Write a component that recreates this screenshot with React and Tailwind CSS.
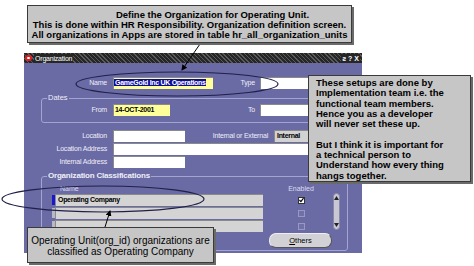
import React from 'react';

const Label = ({ w, children, className = '' }) => (
  <div className={`${w} shrink-0 text-right text-[7px] leading-[12px] text-[#eeeef8] tracking-[-0.2px] ${className}`}>{children}</div>
);

const Field = ({ w, className = 'bg-white', children }) => (
  <div className={`${w} h-[12px] shrink-0 border-t border-l border-[#8a8a8a] border-b-[#f4f4f4] border-r-[#f4f4f4] ${className} text-[7px] leading-[10px] font-bold tracking-[-0.3px] text-black overflow-hidden whitespace-nowrap`}>
    {children}
  </div>
);

const Check = ({ on }) => (
  <div className={`w-[7px] h-[7px] border ${on ? 'border-[#333] bg-white' : 'border-[#9898c0] bg-[#7070a8]'} flex items-center justify-center`}>
    {on && (
      <svg width="6" height="6" viewBox="0 0 6 6">
        <path d="M0.5 3 L2.3 5 L5.5 0.8" stroke="#000" strokeWidth="1.4" fill="none" />
      </svg>
    )}
  </div>
);

const OrgWindow = () => (
  <div className="w-[338px] h-[200px] flex flex-col">
    {/* title bar */}
    <div className="h-[10px] flex items-center bg-[repeating-linear-gradient(45deg,#5a5a5a_0px,#5a5a5a_1px,#262626_1px,#262626_3px)]">
      <div className="ml-[1px] w-[7px] h-[6px] rounded-[3px] border-[2px] border-[#e02020] bg-white" />
      <span className="ml-[2px] px-[1px] bg-[#262626] text-[7px] leading-[9px] text-white tracking-[-0.2px]">Organization</span>
      <div className="ml-auto mr-[2px] flex items-center gap-[2px] bg-[#262626] px-[1px] text-[7px] leading-[9px] font-bold text-white">
        <span>ƨ</span>
        <span>?</span>
        <span>X</span>
      </div>
    </div>

    {/* body */}
    <div className="flex-1 flex flex-col bg-[#6a6aa4] pt-[14px]">
      <div className="flex items-center">
        <Label w="w-[83px]">Name</Label>
        <div className="ml-[6px]">
          <Field w="w-[100px]" className="bg-[#ffff99]">
            <span className="bg-[#0c0c9c] text-white pl-[1px]">GameGold Inc UK Operations</span>
          </Field>
        </div>
        <Label w="w-[42px]">Type</Label>
        <div className="ml-[5px]">
          <Field w="w-[85px]" />
        </div>
      </div>

      {/* Dates group */}
      <div className="relative mt-[9px] ml-[17px] w-[307px] h-[25px] border border-[#a4a4d0] rounded-[3px]">
        <span className="absolute -top-[6px] left-[5px] px-[1px] bg-[#6a6aa4] text-[7.5px] leading-[10px] text-[#eeeef8]">Dates</span>
        <div className="flex items-center pt-[5px]">
          <Label w="w-[65px]">From</Label>
          <div className="ml-[6px]">
            <Field w="w-[57px]" className="bg-[#ffff99]">
              <span className="pl-[1px]">14-OCT-2001</span>
            </Field>
          </div>
          <Label w="w-[85px]">To</Label>
          <div className="ml-[5px]">
            <Field w="w-[85px]" />
          </div>
        </div>
      </div>

      <div className="flex items-center mt-[7px]">
        <Label w="w-[83px]">Location</Label>
        <div className="ml-[6px]"><Field w="w-[72px]" /></div>
        <Label w="w-[83px]">Internal or External</Label>
        <div className="ml-[6px]">
          <Field w="w-[60px]" className="bg-[#d2d2d2]">
            <span className="pl-[2px]">Internal</span>
          </Field>
        </div>
      </div>
      <div className="flex items-center mt-[1px]">
        <Label w="w-[83px]">Location Address</Label>
        <div className="ml-[6px]"><Field w="w-[232px]" /></div>
      </div>
      <div className="flex items-center mt-[1px]">
        <Label w="w-[83px]">Internal Address</Label>
        <div className="ml-[6px]"><Field w="w-[72px]" /></div>
      </div>

      {/* Organization Classifications group */}
      <div className="relative mt-[8px] mb-[2px] ml-[17px] w-[307px] flex-1 border border-[#a4a4d0] rounded-[3px]">
        <span className="absolute -top-[6px] left-[5px] px-[1px] bg-[#6a6aa4] text-[8px] leading-[10px] font-bold text-[#eeeef8] tracking-[-0.2px]">Organization Classifications</span>
        <div className="flex pt-[8px] pl-[18px] text-[7px] leading-[8px] text-[#dcdcf0]">
          <div className="w-[223px]">Name</div>
          <div className="w-[36px] text-center">Enabled</div>
        </div>
        <div className="flex mt-[1px] pl-[10px]">
          <div className="flex flex-col gap-[1px]">
            {['Operating Company', '', ''].map((name, i) => (
              <div key={i} className="flex items-center h-[12px]">
                <div className={`w-[3px] h-[10px] ${i === 0 ? 'bg-[#1818d0]' : 'bg-[#b8b8c8]'}`} />
                <Field w="w-[208px]" className="bg-[#d4d4d4]">
                  <span className="pl-[2px]">{name}</span>
                </Field>
                <div className="w-[64px] pl-[35px]">
                  <Check on={i === 0} />
                </div>
              </div>
            ))}
          </div>
          <div className="ml-[6px] -mt-[1px] w-[7px] h-[37px] rounded-[4px] bg-[#c8c8d4] border border-[#8888a8] flex flex-col items-center justify-between py-[2px]">
            <svg width="5" height="4" viewBox="0 0 5 4"><path d="M0 4 L2.5 0 L5 4Z" fill="#222" /></svg>
            <svg width="5" height="4" viewBox="0 0 5 4"><path d="M0 0 L2.5 4 L5 0Z" fill="#222" /></svg>
          </div>
        </div>
        <div className="ml-[227px] mt-[1px] w-[63px] h-[15px] rounded-[7px] bg-[#d2d2d6] border border-[#eeeef4] border-b-[#555] border-r-[#555] flex items-center justify-center text-[7.5px] text-black">
          <span><span className="underline">O</span>thers</span>
        </div>
      </div>
    </div>
  </div>
);

const Overlay = () => (
  <svg className="absolute inset-0 pointer-events-none" width="474" height="266" viewBox="0 0 474 266">
    <defs>
      <marker id="tip" markerWidth="6" markerHeight="6" refX="5" refY="3" orient="auto">
        <path d="M0 0 L6 3 L0 6Z" fill="#000" />
      </marker>
    </defs>
    <ellipse cx="177" cy="84" rx="101" ry="12" fill="none" stroke="#20204a" strokeWidth="1.2" />
    <line x1="200" y1="44" x2="182" y2="70" stroke="#000" strokeWidth="1" markerEnd="url(#tip)" />
    <ellipse cx="103" cy="199" rx="101" ry="13" fill="none" stroke="#20204a" strokeWidth="1.2" />
    <line x1="105" y1="227" x2="110" y2="211" stroke="#000" strokeWidth="1" markerEnd="url(#tip)" />
  </svg>
);

export default function App() {
  return (
    <div className="relative w-[474px] h-[266px] overflow-hidden bg-white font-['Liberation_Sans',Arial,sans-serif]">
      <div className="pl-[24px] pt-[53px]">
        <OrgWindow />
      </div>
      <Overlay />

      {/* top note */}
      <div className="absolute left-[27px] top-[5px] w-[325px] h-[38px] bg-[#c6c6c6] border border-[#3a3a3a] shadow-[2px_2px_0_#6a6a6a] pt-[4px] text-center text-[9.5px] leading-[10px] font-bold text-black">
        <div className="pl-[46px]">Define the Organization for Operating Unit.</div>
        <div>This is done within HR Responsibility. Organization definition screen.</div>
        <div>All organizations in Apps are stored in table hr_all_organization_units</div>
      </div>

      {/* right note */}
      <div className="absolute left-[308px] top-[75px] w-[163px] h-[107px] bg-[#c6c6c6] border border-[#3a3a3a] shadow-[2px_2px_0_#6a6a6a] pl-[7px] pt-[2px] text-[9.5px] leading-[10.3px] font-bold text-black">
        <div>These setups are done by</div>
        <div>Implementation team i.e. the</div>
        <div>functional team members.</div>
        <div>Hence you as a developer</div>
        <div>will never set these up.</div>
        <div className="h-[10.3px]" />
        <div>But I think it is important for</div>
        <div>a technical person to</div>
        <div>Understand how every thing</div>
        <div>hangs together.</div>
      </div>

      {/* bottom note */}
      <div className="absolute left-[27px] top-[227px] w-[187px] h-[36px] bg-[#c6c6c6] border border-[#3a3a3a] shadow-[2px_2px_0_#6a6a6a] pt-[7px] text-center text-[10px] leading-[11px] text-black">
        <div>Operating Unit(org_id) organizations are</div>
        <div>classified as Operating Company</div>
      </div>
    </div>
  );
}
